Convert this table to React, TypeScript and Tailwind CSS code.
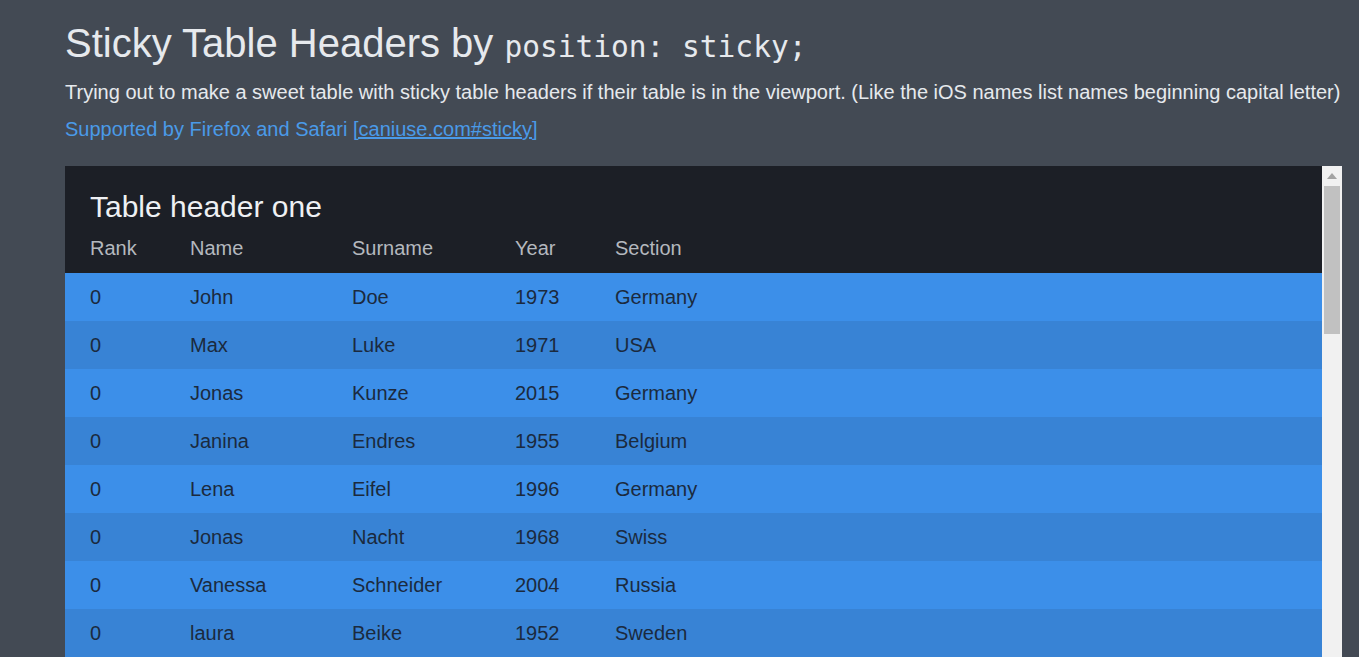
import React from "react"

const rows = [
  ["0", "John", "Doe", "1973", "Germany"],
  ["0", "Max", "Luke", "1971", "USA"],
  ["0", "Jonas", "Kunze", "2015", "Germany"],
  ["0", "Janina", "Endres", "1955", "Belgium"],
  ["0", "Lena", "Eifel", "1996", "Germany"],
  ["0", "Jonas", "Nacht", "1968", "Swiss"],
  ["0", "Vanessa", "Schneider", "2004", "Russia"],
  ["0", "laura", "Beike", "1952", "Sweden"],
]

const cols = "grid grid-cols-[100px_162px_163px_100px_1fr]"

export default function App() {
  return (
    <div
      className="h-screen overflow-hidden bg-[#434a54] pl-[65px] pr-[17px]"
      style={{ fontFamily: '"Liberation Sans", Arial, sans-serif' }}
    >
      {/* Intro */}
      <h1 className="pt-[19px] text-[40px] leading-[48px] text-[#e6e9ed]">
        Sticky Table Headers by{" "}
        <code className="font-['DejaVu_Sans_Mono',monospace] text-[29.5px]">position: sticky;</code>
      </h1>
      <p className="mt-[9px] whitespace-nowrap text-[20px] leading-[24px] text-[#e6e9ed]">
        Trying out to make a sweet table with sticky table headers if their table is in the viewport. (Like the iOS names list names beginning capital letter)
      </p>
      <p className="mt-[13px] text-[20px] leading-[24px] text-[#4a9ae8]">
        Supported by Firefox and Safari <a className="underline">[caniuse.com#sticky]</a>
      </p>

      {/* Table box with scrollbar */}
      <div className="mt-[25px] flex h-[560px]">
        <div className="flex-1 overflow-hidden">
          <div className="bg-[#1c1f26] px-[25px] pt-[24px] pb-[11px]">
            <div className="text-[30px] leading-[34px] text-[#eef0f3]">Table header one</div>
            <div className={`${cols} mt-[10px] text-[20px] leading-[28px] text-[#b4b8be]`}>
              <span>Rank</span>
              <span>Name</span>
              <span>Surname</span>
              <span>Year</span>
              <span>Section</span>
            </div>
          </div>
          {rows.map((r, i) => (
            <div
              key={i}
              className={`${cols} h-[48px] items-center px-[25px] text-[20px] text-[#1b2a3e] ${
                i % 2 === 0 ? "bg-[#3c8fe9]" : "bg-[#3883d5]"
              }`}
            >
              {r.map((c, j) => (
                <span key={j}>{c}</span>
              ))}
            </div>
          ))}
        </div>
        <div className="flex w-[20px] flex-col bg-[#f1f1f1]">
          <div className="flex h-[20px] items-center justify-center">
            <svg width="10" height="6" viewBox="0 0 10 6">
              <path d="M0 6 L5 0 L10 6 Z" fill="#a3a3a3" />
            </svg>
          </div>
          <div className="mx-[2px] h-[148px] bg-[#c1c1c1]" />
        </div>
      </div>
    </div>
  )
}
